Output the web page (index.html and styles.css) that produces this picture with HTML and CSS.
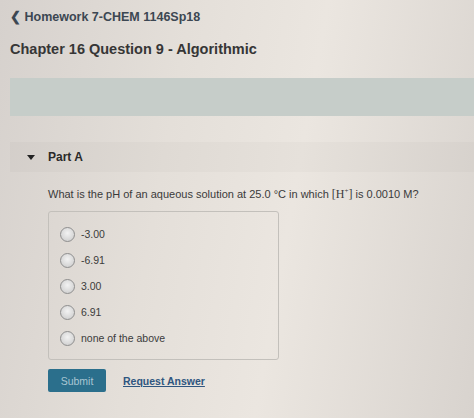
FILE: index.html
```html
<!DOCTYPE html>
<html lang="en">
<head>
  <meta charset="UTF-8">
  <title>Chapter 16 Question 9 - Algorithmic</title>
  <link rel="stylesheet" href="styles.css">
</head>
<body>
  <div class="page">
    <a class="back-link" href="#">&#10094; Homework 7-CHEM 1146Sp18</a>
    <h1>Chapter 16 Question 9 - Algorithmic</h1>

    <div class="info-band"></div>

    <div class="part-header">
      <span class="caret"></span>
      <span class="part-title">Part A</span>
    </div>

    <div class="part-body">
      <p class="question">What is the pH of an aqueous solution at 25.0 &deg;C in which <span class="math">[H<sup>+</sup>]</span> is 0.0010 M?</p>

      <div class="choices">
        <label class="choice"><span class="radio"></span>-3.00</label>
        <label class="choice"><span class="radio"></span>-6.91</label>
        <label class="choice"><span class="radio"></span>3.00</label>
        <label class="choice"><span class="radio"></span>6.91</label>
        <label class="choice"><span class="radio"></span>none of the above</label>
      </div>

      <div class="actions">
        <button class="submit-btn">Submit</button>
        <a class="request-link" href="#">Request Answer</a>
      </div>
    </div>
  </div>
</body>
</html>
```

FILE: styles.css
```css
body {
  margin: 0;
  font-family: 'Liberation Sans', Arial, sans-serif;
  color: #333;
  background: linear-gradient(100deg, #d6d1cd 0%, #e4dfd9 35%, #ebe6e0 60%, #d8d3ce 100%);
  height: 418px;
  overflow: hidden;
}
.page {
  padding: 9px 0 0 10px;
}
.back-link {
  display: block;
  font-size: 12.5px;
  font-weight: 700;
  color: #3c4752;
  text-decoration: none;
  line-height: 16px;
}
h1 {
  margin: 15px 0 0 0;
  font-size: 14.5px;
  font-weight: 700;
  color: #363636;
  line-height: 18px;
}
.info-band {
  margin-top: 20px;
  height: 38px;
  background: #c6cdc9;
}
.part-header {
  display: flex;
  align-items: center;
  margin-top: 26px;
  height: 30px;
  background: rgba(0,0,0,0.02);
}
.caret {
  width: 0;
  height: 0;
  margin-left: 17px;
  border-left: 4px solid transparent;
  border-right: 4px solid transparent;
  border-top: 5px solid #222;
}
.part-title {
  margin-left: 13px;
  font-size: 12px;
  font-weight: 700;
  color: #2a2a2a;
}
.part-body {
  padding-left: 38px;
}
.question {
  margin: 12px 0 0 0;
  font-size: 11px;
  color: #3a3a3a;
  line-height: 14px;
}
.math {
  font-family: 'Liberation Serif', serif;
  font-size: 12px;
}
.math sup {
  font-size: 7px;
}
.choices {
  margin-top: 10px;
  width: 231px;
  height: 149px;
  box-sizing: border-box;
  border: 1px solid #c3c0bb;
  border-radius: 3px;
  padding-top: 9px;
}
.choice {
  display: flex;
  align-items: center;
  height: 26px;
  padding-left: 11px;
  font-size: 10.5px;
  color: #3b3b3b;
}
.radio {
  width: 13px;
  height: 13px;
  border-radius: 50%;
  border: 1px solid #8e8e8e;
  background: radial-gradient(circle at 50% 40%, #f2f2f2, #c9c9c9);
  margin-right: 6px;
  flex-shrink: 0;
}
.actions {
  display: flex;
  align-items: center;
  margin-top: 9px;
}
.submit-btn {
  width: 58px;
  height: 23px;
  border: none;
  border-radius: 2px;
  background: #2b6f8c;
  color: #a9c6d3;
  font-family: 'Liberation Sans', Arial, sans-serif;
  font-size: 10.5px;
  padding: 0;
}
.request-link {
  margin-left: 17px;
  font-size: 10.5px;
  font-weight: 700;
  color: #2f5680;
  text-decoration: underline;
}
```
